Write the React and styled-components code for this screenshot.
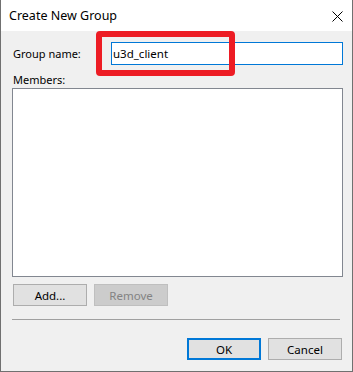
import styled, { createGlobalStyle } from "styled-components";

const GlobalStyle = createGlobalStyle`
  html, body {
    margin: 0;
    padding: 0;
    background: #f0f0f0;
  }
  * {
    box-sizing: border-box;
  }
`;

const Window = styled.div`
  position: relative;
  width: 353px;
  height: 372px;
  display: flex;
  flex-direction: column;
  border: 1px solid #707070;
  border-top: none;
  font-family: "Noto Sans", "Open Sans", sans-serif;
  font-size: 11px;
  color: #000000;
`;

const TitleBar = styled.div`
  height: 31px;
  flex-shrink: 0;
  background: #ffffff;
  display: flex;
  align-items: center;
  justify-content: space-between;
  padding-left: 8px;
`;

const Title = styled.span`
  font-size: 12.5px;
  color: #000000;
`;

const CloseButton = styled.div`
  width: 30px;
  height: 31px;
  display: flex;
  align-items: center;
  justify-content: center;
  padding-top: 1px;
`;

const Body = styled.div`
  flex: 1;
  background: #f0f0f0;
  display: flex;
  flex-direction: column;
  padding: 11px 9px 0 11px;
`;

const FieldRow = styled.div`
  display: flex;
  align-items: center;
`;

const Label = styled.label`
  width: 99px;
  flex-shrink: 0;
  line-height: 15px;
  padding-left: 1px;
  color: #000000;
`;

const TextInput = styled.div`
  flex: 1;
  height: 23px;
  border: 1px solid #0078d7;
  background: #ffffff;
  display: flex;
  align-items: center;
  padding-left: 1px;
  font-size: 11.5px;
`;

const MembersLabel = styled.div`
  margin-top: 7px;
  padding-left: 1px;
  line-height: 15px;
`;

const ListBox = styled.div`
  margin-top: 1px;
  height: 189px;
  background: #ffffff;
  border: 1px solid #828790;
`;

const ButtonRow = styled.div`
  display: flex;
  gap: 7px;
  justify-content: ${(p) => (p.$end ? "flex-end" : "flex-start")};
  margin-top: ${(p) => p.$top}px;
  padding-left: ${(p) => (p.$end ? 0 : 1)}px;
  padding-right: ${(p) => (p.$end ? 1 : 0)}px;
`;

const Button = styled.div`
  width: 74px;
  height: 22px;
  display: flex;
  align-items: center;
  justify-content: center;
  font-size: 11.5px;
  background: ${(p) => (p.$disabled ? "#cccccc" : "#e1e1e1")};
  border: ${(p) =>
    p.$default
      ? "2px solid #0078d7"
      : p.$disabled
      ? "1px solid #bfbfbf"
      : "1px solid #adadad"};
  color: ${(p) => (p.$disabled ? "#838383" : "#000000")};
`;

const Separator = styled.div`
  margin-top: 13px;
  margin-right: 3px;
  height: 1px;
  background: #a0a0a0;
`;

const Highlight = styled.div`
  position: absolute;
  left: 95px;
  top: 31px;
  width: 139px;
  height: 45px;
  border: 6px solid #ed1c24;
  border-radius: 4px;
  pointer-events: none;
`;

export default function App() {
  return (
    <>
      <GlobalStyle />
      <Window>
        <TitleBar>
          <Title>Create New Group</Title>
          <CloseButton>
            <svg width="11" height="11" viewBox="0 0 11 11">
              <path
                d="M0.5 0.5 L10.5 10.5 M10.5 0.5 L0.5 10.5"
                stroke="#000000"
                strokeWidth="1"
                fill="none"
              />
            </svg>
          </CloseButton>
        </TitleBar>
        <Body>
          <FieldRow>
            <Label>Group name:</Label>
            <TextInput>u3d_client</TextInput>
          </FieldRow>
          <MembersLabel>Members:</MembersLabel>
          <ListBox />
          <ButtonRow $top={7}>
            <Button>Add...</Button>
            <Button $disabled>Remove</Button>
          </ButtonRow>
          <Separator />
          <ButtonRow $end $top={18}>
            <Button $default>OK</Button>
            <Button>Cancel</Button>
          </ButtonRow>
        </Body>
        <Highlight />
      </Window>
    </>
  );
}
